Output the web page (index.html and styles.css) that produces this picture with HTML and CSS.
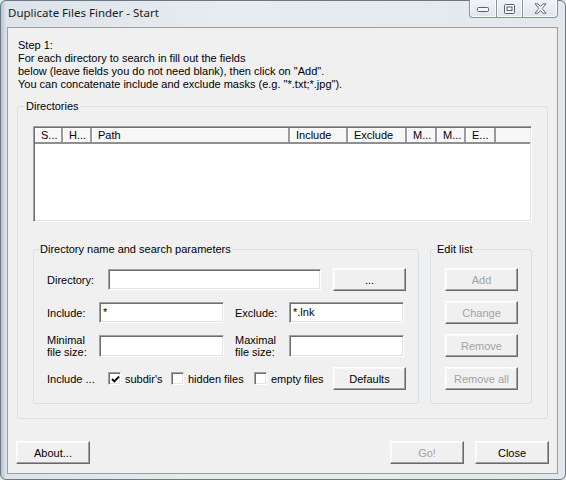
FILE: index.html
```html
<!DOCTYPE html>
<html>
<head>
<meta charset="utf-8">
<title>Duplicate Files Finder - Start</title>
<link rel="stylesheet" href="styles.css">
</head>
<body>
<div class="window">
  <div class="titlebar">
    <span class="title">Duplicate Files Finder - Start</span>
    <div class="caption">
      <div class="cbtn min">
        <svg width="12" height="6" viewBox="0 0 12 6"><rect x="0.5" y="0.5" width="11" height="4" rx="1" fill="#f4f6f8" stroke="#55606c"/></svg>
      </div>
      <div class="cbtn max">
        <svg width="11" height="10" viewBox="0 0 11 10"><rect x="0.5" y="0.5" width="10" height="9" rx="1" fill="#f4f6f8" stroke="#55606c"/><rect x="3" y="3" width="5" height="3.5" fill="none" stroke="#55606c"/></svg>
      </div>
      <div class="cbtn close">
        <svg width="13" height="11" viewBox="0 0 13 11"><path d="M1 0.8 L4 0.8 L6.5 3.5 L9 0.8 L12 0.8 L8.2 5.5 L12 10.2 L9 10.2 L6.5 7.5 L4 10.2 L1 10.2 L4.8 5.5 Z" fill="#f4f6f8" stroke="#55606c" stroke-width="0.9" stroke-linejoin="round"/></svg>
      </div>
    </div>
  </div>
  <div class="client">
    <div class="intro">
      <div>Step 1:</div>
      <div>For each directory to search in fill out the fields</div>
      <div>below (leave fields you do not need blank), then click on "Add".</div>
      <div>You can concatenate include and exclude masks (e.g. "*.txt;*.jpg").</div>
    </div>

    <div class="group dirs">
      <div class="group-label">Directories</div>
      <div class="listview">
        <div class="lv-header">
          <div class="col c-s">S...</div>
          <div class="col c-h">H...</div>
          <div class="col c-path">Path</div>
          <div class="col c-inc">Include</div>
          <div class="col c-exc">Exclude</div>
          <div class="col c-m1">M...</div>
          <div class="col c-m2">M...</div>
          <div class="col c-e">E...</div>
          <div class="col-rest"></div>
        </div>
        <div class="lv-body"></div>
      </div>

      <div class="subgroups">
        <div class="group params">
          <div class="group-label">Directory name and search parameters</div>
          <div class="rows">
            <div class="row">
              <span class="lbl w61">Directory:</span>
              <div class="edit w213"></div>
              <button class="btn browse">...</button>
            </div>
            <div class="row">
              <span class="lbl w52">Include:</span>
              <div class="edit w125">*</div>
              <span class="lbl w54 ml11">Exclude:</span>
              <div class="edit w115">*.lnk</div>
            </div>
            <div class="row">
              <span class="lbl two w52">Minimal<br>file size:</span>
              <div class="edit w125 tall"></div>
              <span class="lbl two w54 ml11">Maximal<br>file size:</span>
              <div class="edit w115 tall"></div>
            </div>
            <div class="row">
              <span class="lbl w61">Include ...</span>
              <label class="check w63"><span class="chk"><svg width="9" height="9" viewBox="0 0 9 9"><path d="M1 4 L3.3 6.4 L8 1.6" fill="none" stroke="#000" stroke-width="1.9"/></svg></span>subdir's</label>
              <label class="check w83"><span class="chk"></span>hidden files</label>
              <label class="check w79"><span class="chk"></span>empty files</label>
              <button class="btn defaults">Defaults</button>
            </div>
          </div>
        </div>
        <div class="group editlist">
          <div class="group-label el">Edit list</div>
          <div class="rows">
            <button class="btn disabled">Add</button>
            <button class="btn disabled">Change</button>
            <button class="btn disabled">Remove</button>
            <button class="btn disabled">Remove all</button>
          </div>
        </div>
      </div>
    </div>

    <div class="bottombar">
      <button class="btn big">About...</button>
      <div class="spacer"></div>
      <button class="btn big disabled">Go!</button>
      <button class="btn big">Close</button>
    </div>
  </div>
</div>
</body>
</html>
```

FILE: styles.css
```css
* { box-sizing: border-box; }
html, body { margin: 0; padding: 0; }
body {
  width: 566px;
  height: 480px;
  overflow: hidden;
  background: #dfe5eb;
  font-family: "Liberation Sans", Arial, sans-serif;
  font-size: 11px;
  color: #000;
}

.window {
  width: 566px;
  height: 480px;
  border: 1px solid #6c7885;
  border-radius: 6px;
  background: linear-gradient(to right, #b9c2cb 0, #dde3e9 5px, #e7ecf0 40%, #e3e8ed 100%);
  padding: 0 7px 5px 6px;
  display: flex;
  flex-direction: column;
}

.titlebar {
  height: 26px;
  display: flex;
  align-items: flex-start;
  padding-left: 1px;
  flex: none;
}
.title {
  font-family: "Noto Sans", "Open Sans", sans-serif;
  font-size: 11.5px;
  line-height: 24px;
  color: #1b1b1b;
}
.caption {
  margin-left: auto;
  margin-top: -1px;
  display: flex;
  height: 18px;
}
.cbtn {
  height: 18px;
  border: 1px solid #8591a0;
  border-top: none;
  background: linear-gradient(#f1f4f7, #dfe5eb);
  box-shadow: inset 1px 0 rgba(255,255,255,0.85), inset -1px -1px rgba(255,255,255,0.85);
  display: flex;
  align-items: center;
  justify-content: center;
}
.cbtn.min { width: 27px; border-right: none; border-bottom-left-radius: 4px; padding-top: 3px; }
.cbtn.max { width: 26px; border-right: none; }
.cbtn.close { width: 36px; border-bottom-right-radius: 4px; }

.client {
  flex: 1;
  border: 1px solid #93a0ad;
  background: #f0f0f0;
  display: flex;
  flex-direction: column;
}

.intro {
  padding: 11px 0 0 10px;
  line-height: 13px;
}

.group {
  border: 1px solid #d5dfe5;
  border-radius: 3px;
}
.group-label {
  width: fit-content;
  background: #f0f0f0;
  line-height: 13px;
  padding: 0 1px;
  margin-top: -7px;
  margin-left: -8px;
}

.dirs {
  margin: 15px 0 0 9px;
  width: 531px;
  padding: 0 15px 14px 15px;
}

.listview {
  margin-top: 13px;
  width: 499px;
  height: 96px;
  border: 1px solid;
  border-color: #a0a0a0 #ffffff #ffffff #a0a0a0;
  box-shadow: inset 1px 1px #6e6e6e, inset -1px -1px #e3e3e3;
  background: #fff;
  padding: 1px 1px 1px 1px;
  display: flex;
  flex-direction: column;
}
.lv-header {
  display: flex;
  height: 16px;
  border-bottom: 2px solid #8f8f8f;
  background: #f7f7f7;
  flex: none;
}
.col {
  height: 14px;
  line-height: 14px;
  padding-left: 6px;
  border-right: 2px solid #9a9a9a;
  box-shadow: inset 1px 1px #ffffff;
  white-space: nowrap;
  overflow: hidden;
}
.col-rest { flex: 1; }
.c-s { width: 28px; }
.c-h { width: 29px; }
.c-path { width: 198px; }
.c-inc { width: 58px; }
.c-exc { width: 59px; }
.c-m1 { width: 30px; }
.c-m2 { width: 29px; }
.c-e { width: 30px; }
.lv-body { flex: 1; }

.subgroups {
  margin-top: 27px;
  display: flex;
  gap: 11px;
}
.params {
  width: 386px;
  padding: 0 13px 13px 13px;
}
.editlist {
  width: 102px;
  padding: 0 14px 13px 14px;
}
.group-label.el { margin-left: -9px; }

.rows {
  margin-top: 12px;
  display: flex;
  flex-direction: column;
  gap: 10px;
}
.row {
  height: 23px;
  display: flex;
  align-items: center;
}
.lbl { flex: none; white-space: nowrap; }
.lbl.two { line-height: 12px; }
.w61 { width: 61px; }
.w52 { width: 52px; }
.w54 { width: 54px; }
.w63 { width: 63px; }
.w83 { width: 83px; }
.w79 { width: 79px; }
.w213 { width: 213px; }
.w125 { width: 125px; }
.w115 { width: 115px; }
.ml11 { margin-left: 11px; }

.edit {
  flex: none;
  height: 21px;
  background: #fff;
  border: 1px solid;
  border-color: #a0a0a0 #ffffff #ffffff #a0a0a0;
  box-shadow: inset 1px 1px #6e6e6e, inset -1px -1px #e3e3e3;
  padding: 2px 3px;
  line-height: 14px;
}
.edit.tall { height: 22px; }

.btn {
  flex: none;
  width: 73px;
  height: 23px;
  margin: 0;
  padding: 0;
  font-family: "Liberation Sans", Arial, sans-serif;
  font-size: 11px;
  color: #000;
  background: #f0f0f0;
  border: 1px solid;
  border-color: #ffffff #696969 #696969 #ffffff;
  box-shadow: inset -1px -1px #a0a0a0, inset 1px 1px #f8f8f8;
  border-radius: 0;
}
.btn.browse { margin-left: 12px; }
.btn.defaults { width: 73px; }
.btn.disabled { color: #a3a3a3; }
.btn.big { width: 74px; }

.check {
  flex: none;
  display: flex;
  align-items: center;
  white-space: nowrap;
}
.chk {
  width: 13px;
  height: 13px;
  margin-right: 4px;
  background: #fff;
  border: 1px solid;
  border-color: #a0a0a0 #ffffff #ffffff #a0a0a0;
  box-shadow: inset 1px 1px #6e6e6e, inset -1px -1px #e3e3e3;
  display: flex;
  align-items: center;
  justify-content: center;
}
.chk svg { display: block; margin: 1px 0 0 1px; }

.bottombar {
  margin-top: 22px;
  padding: 0 8px 0 8px;
  display: flex;
  gap: 11px;
}
.spacer { flex: 1; }
```
